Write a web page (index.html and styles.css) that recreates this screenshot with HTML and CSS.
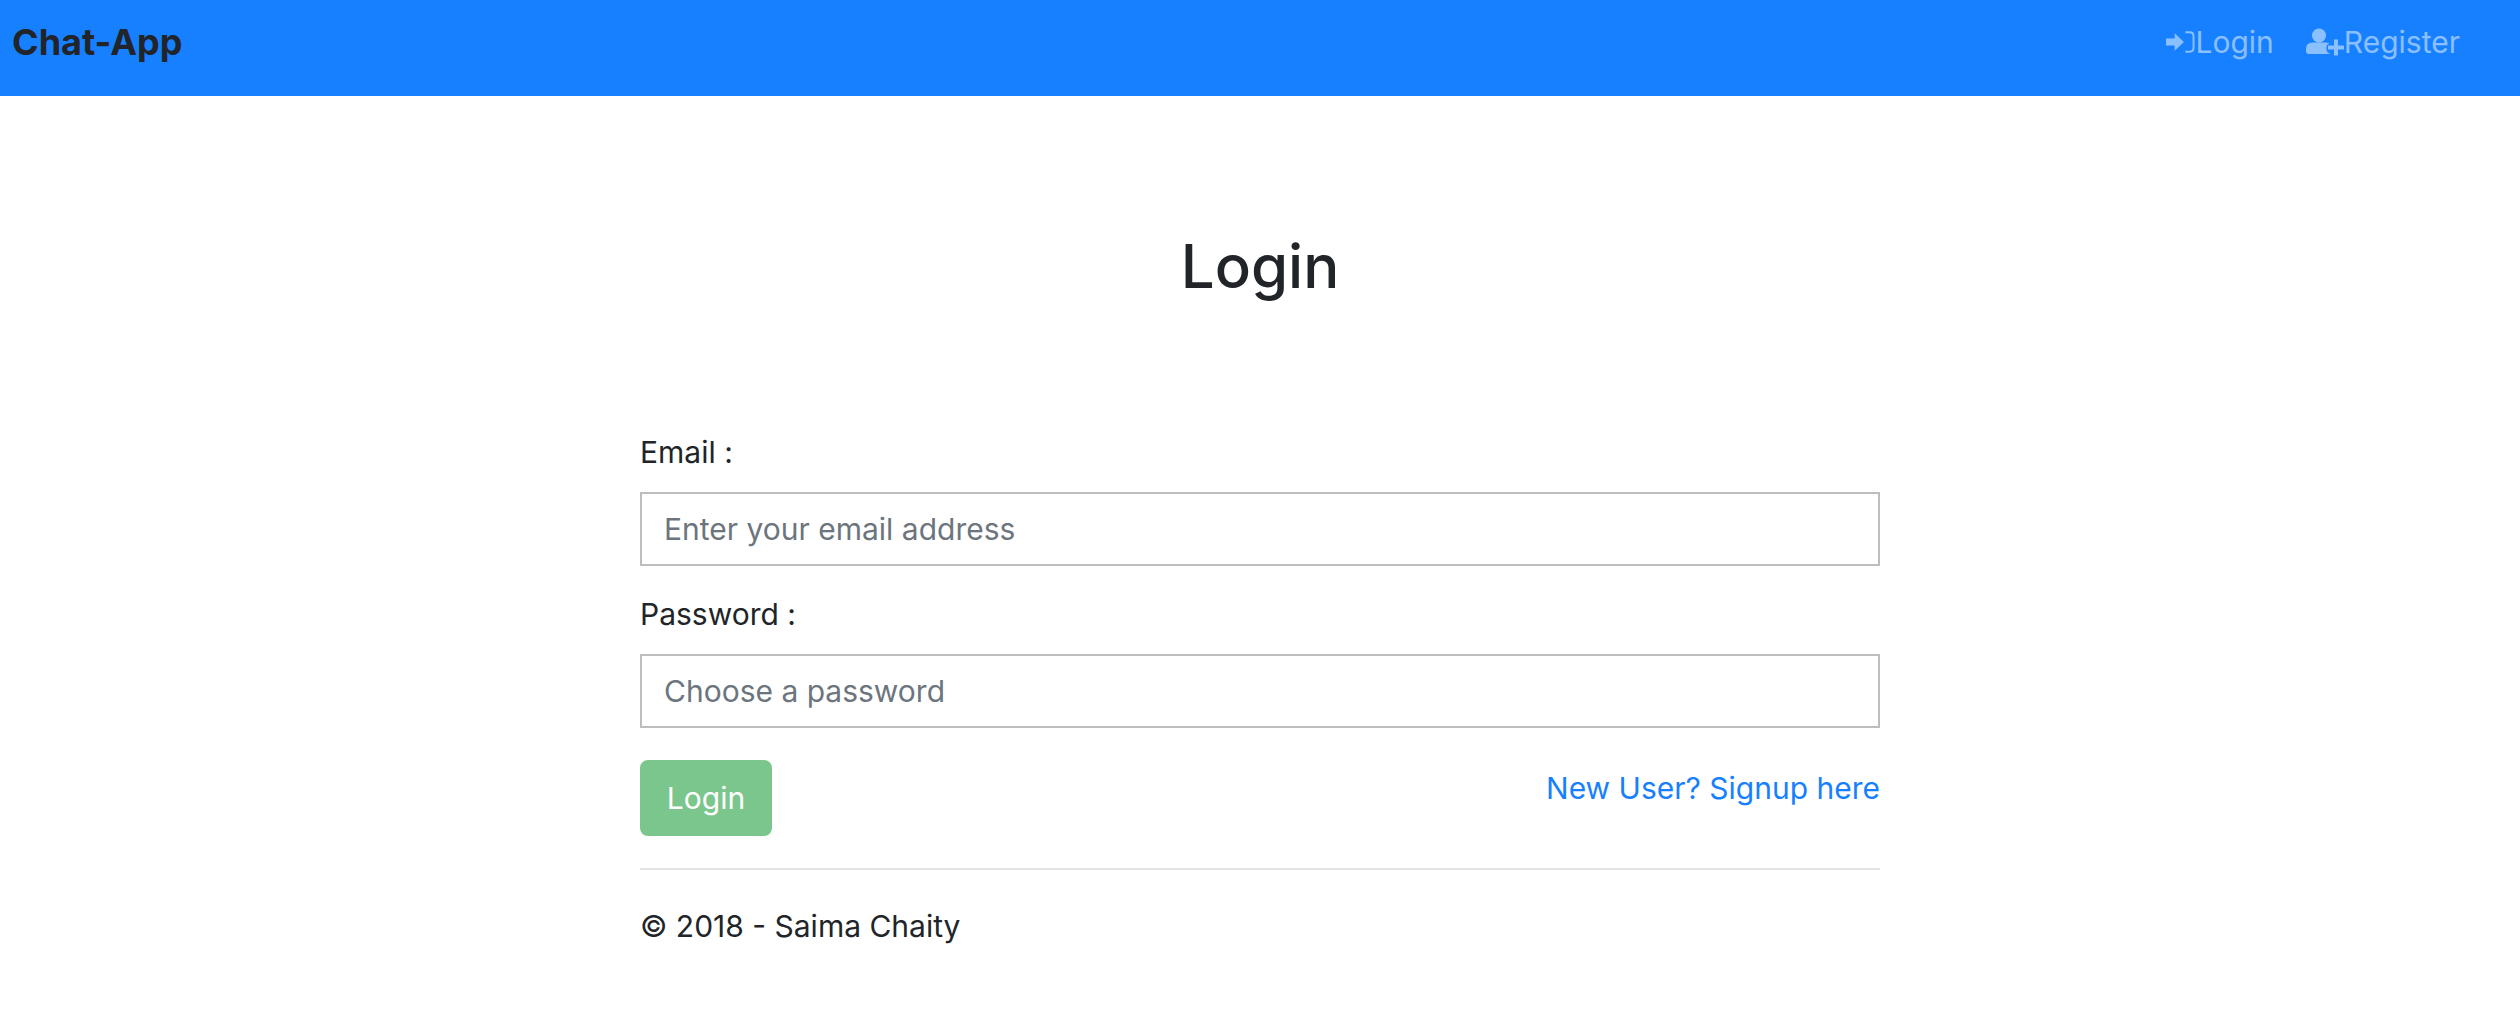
FILE: index.html
```html
<!DOCTYPE html>
<html lang="en">
<head>
  <meta charset="UTF-8">
  <meta name="viewport" content="width=device-width, initial-scale=1.0">
  <title>Chat-App</title>
  <link rel="stylesheet" href="styles.css">
</head>
<body>

  <nav class="navbar">
    <a class="brand" href="#">Chat-App</a>
    <div class="nav-links">
      <a class="nav-link" href="#">
        <svg class="icon icon-login" viewBox="0 0 30 24">
          <path d="M0 8.5h9V3l9.5 9L9 21v-5.500H0z"/>
          <path d="M20 2h4.500Q28.500 2 28.500 6v12q0 4-4 4H20" fill="none" stroke="currentColor" stroke-width="2"/>
        </svg>Login
      </a>
      <a class="nav-link" href="#">
        <svg class="icon icon-register" viewBox="0 0 38 28">
          <circle cx="13" cy="7.500" r="7"/>
          <path d="M0 24v-3q0-6.500 6.500-6.500h13q2.500 0 4 1-3 .5-3 3.500v2q0 4 4 5H3q-3 0-3-3z"/>
          <path d="M22 17.500h6v-6h4v6h6v4h-6v6h-4v-6h-6z"/>
        </svg>Register
      </a>
    </div>
  </nav>

  <main class="container">
    <h1 class="page-title">Login</h1>

    <form class="login-form">
      <div class="form-group">
        <label class="form-label" for="email">Email :</label>
        <input class="form-input" id="email" type="text" placeholder="Enter your email address">
      </div>
      <div class="form-group">
        <label class="form-label" for="password">Password :</label>
        <input class="form-input" id="password" type="password" placeholder="Choose a password">
      </div>
      <div class="form-actions">
        <button class="btn-login" type="button">Login</button>
        <a class="signup-link" href="#">New User? Signup here</a>
      </div>
    </form>

    <hr class="divider">
    <footer class="footer">© 2018 - Saima Chaity</footer>
  </main>

</body>
</html>
```

FILE: styles.css
```css
* {
  box-sizing: border-box;
  margin: 0;
  padding: 0;
}
body {
  font-family: Inter, "Noto Sans", sans-serif;
  font-size: 30px;
  line-height: 48px;
  color: #212529;
  background-color: #fff;
}
a {
  text-decoration: none;
}
.navbar {
  height: 96px;
  padding: 0 60px 12px 12px;
  display: flex;
  justify-content: space-between;
  align-items: center;
  background-color: #1780ff;
}
.brand {
  font-size: 36px;
  font-weight: 700;
  color: #212529;
}
.nav-links {
  display: flex;
  gap: 32px;
}
.nav-link {
  display: flex;
  align-items: center;
  color: rgba(255, 255, 255, 0.5);
}
.icon {
  fill: currentColor;
}
.icon-login {
  width: 29px;
  height: 24px;
}
.icon-register {
  width: 38px;
  height: 28px;
}
.container {
  width: 1240px;
  margin: 0 auto;
}
.page-title {
  margin-top: 128px;
  margin-bottom: 120px;
  font-size: 60px;
  font-weight: 500;
  line-height: 84px;
  text-align: center;
}
.form-group {
  margin-bottom: 24px;
}
.form-label {
  display: block;
  margin-bottom: 16px;
}
.form-input {
  display: block;
  width: 100%;
  height: 74px;
  padding: 0 22px;
  font-family: inherit;
  font-size: 30px;
  color: #495057;
  background-color: #fff;
  border: 2px solid #bdbdbd;
}
.form-input::placeholder {
  color: #6c757d;
  opacity: 1;
}
.form-actions {
  display: flex;
  justify-content: space-between;
  align-items: flex-start;
  margin-top: 32px;
}
.btn-login {
  width: 132px;
  height: 76px;
  font-family: inherit;
  font-size: 30px;
  color: #fff;
  background-color: #7bc68c;
  border: none;
  border-radius: 8px;
}
.signup-link {
  margin-top: 4px;
  color: #1780ff;
}
.divider {
  margin-top: 32px;
  border: none;
  border-top: 2px solid #e3e3e3;
}
.footer {
  margin-top: 32px;
}
```
